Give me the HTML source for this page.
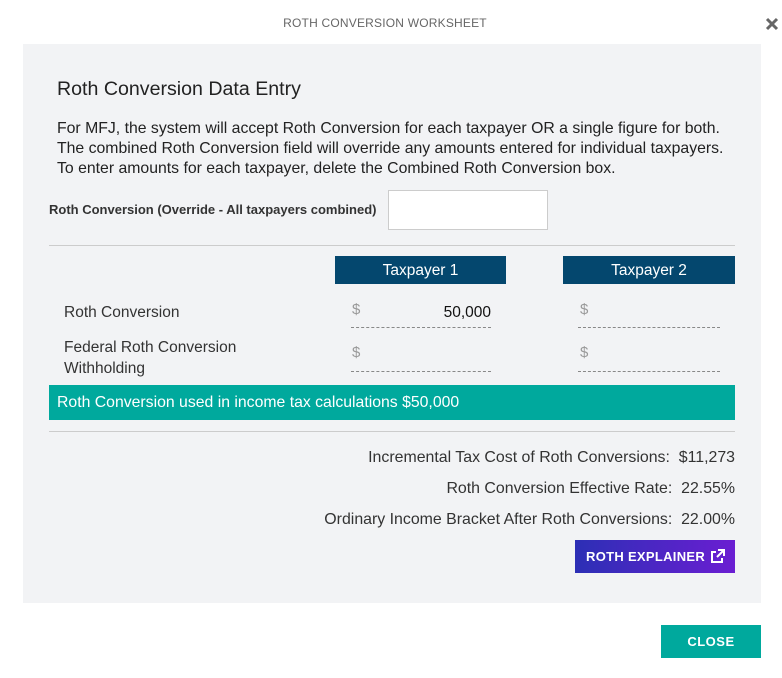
<!DOCTYPE html>
<html><head><style>
*{margin:0;padding:0;box-sizing:border-box}
body{width:782px;height:678px;background:#fff;font-family:"Liberation Sans",sans-serif;color:#333;position:relative;overflow:hidden}
.a{position:absolute;white-space:nowrap}
.panel{position:absolute;left:23px;top:44px;width:738px;height:559px;background:#f2f3f5}
.hr{position:absolute;left:49px;width:686px;height:1px;background:#ccc}
.th{position:absolute;top:256px;height:28px;background:#04476e;color:#fff;font-size:15.5px;text-align:center;line-height:29px}
.dash{position:absolute;height:0;border-top:1px dashed #888}
.dol{position:absolute;color:#999;font-size:15px}
.r{position:absolute;right:47px;font-size:15.9px;color:#333;text-align:right;white-space:nowrap}
</style></head><body>
<div class="a" style="left:0;width:770px;text-align:center;top:16px;font-size:12px;color:#666;letter-spacing:0.2px">ROTH CONVERSION WORKSHEET</div>
<svg class="a" style="left:765px;top:17px" width="14" height="14" viewBox="0 0 14 14"><path d="M2 2L12 12M12 2L2 12" stroke="#666" stroke-width="3"/></svg>
<div class="panel"></div>
<div class="a" style="left:57px;top:78px;font-size:19.6px;color:#222">Roth Conversion Data Entry</div>
<div class="a" style="left:57px;top:119px;font-size:15.8px;line-height:20px;color:#222">For MFJ, the system will accept Roth Conversion for each taxpayer OR a single figure for both.<br>The combined Roth Conversion field will override any amounts entered for individual taxpayers.<br>To enter amounts for each taxpayer, delete the Combined Roth Conversion box.</div>
<div class="a" style="left:49px;top:202px;font-size:13px;font-weight:bold;color:#333">Roth Conversion (Override - All taxpayers combined)</div>
<div class="a" style="left:388px;top:190px;width:160px;height:40px;background:#fff;border:1px solid #ccc"></div>
<div class="hr" style="top:245px"></div>
<div class="th" style="left:335px;width:171px">Taxpayer 1</div>
<div class="th" style="left:563px;width:172px">Taxpayer 2</div>
<div class="a" style="left:64px;top:304px;font-size:15.5px">Roth Conversion</div>
<div class="a" style="left:64px;top:337px;font-size:15.5px;line-height:21px">Federal Roth Conversion<br>Withholding</div>
<div class="dol" style="left:352px;top:301px">$</div>
<div class="dol" style="left:580px;top:301px">$</div>
<div class="dol" style="left:352px;top:344px">$</div>
<div class="dol" style="left:580px;top:344px">$</div>
<div class="a" style="left:400px;width:91px;text-align:right;top:304px;font-size:15.5px;color:#111">50,000</div>
<div class="dash" style="left:351px;width:140px;top:327px"></div>
<div class="dash" style="left:578px;width:142px;top:327px"></div>
<div class="dash" style="left:351px;width:140px;top:371px"></div>
<div class="dash" style="left:578px;width:142px;top:371px"></div>
<div class="a" style="left:49px;top:385px;width:686px;height:35px;background:#00a99d;color:#fff;font-size:15.8px;line-height:35px;padding-left:8px">Roth Conversion used in income tax calculations $50,000</div>
<div class="hr" style="top:431px"></div>
<div class="r" style="top:449px">Incremental Tax Cost of Roth Conversions:&nbsp; $11,273</div>
<div class="r" style="top:480px">Roth Conversion Effective Rate:&nbsp; 22.55%</div>
<div class="r" style="top:511px">Ordinary Income Bracket After Roth Conversions:&nbsp; 22.00%</div>
<div class="a" style="left:575px;top:540px;width:160px;height:33px;background:linear-gradient(90deg,#2c2fb5,#6b1ed2);color:#fff;font-size:13px;font-weight:bold;line-height:33px;padding-left:11px;letter-spacing:0.3px">ROTH EXPLAINER
<svg style="position:absolute;left:135px;top:9px" width="15" height="15" viewBox="0 0 15 15"><path d="M6 3H2v10h10V9" fill="none" stroke="#fff" stroke-width="2"/><path d="M8 1h6v6M14 1L7 8" fill="none" stroke="#fff" stroke-width="2"/></svg></div>
<div class="a" style="left:661px;top:625px;width:100px;height:33px;background:#00a99d;color:#fff;font-size:13px;font-weight:bold;line-height:33px;text-align:center;letter-spacing:0.5px">CLOSE</div>
</body></html>
